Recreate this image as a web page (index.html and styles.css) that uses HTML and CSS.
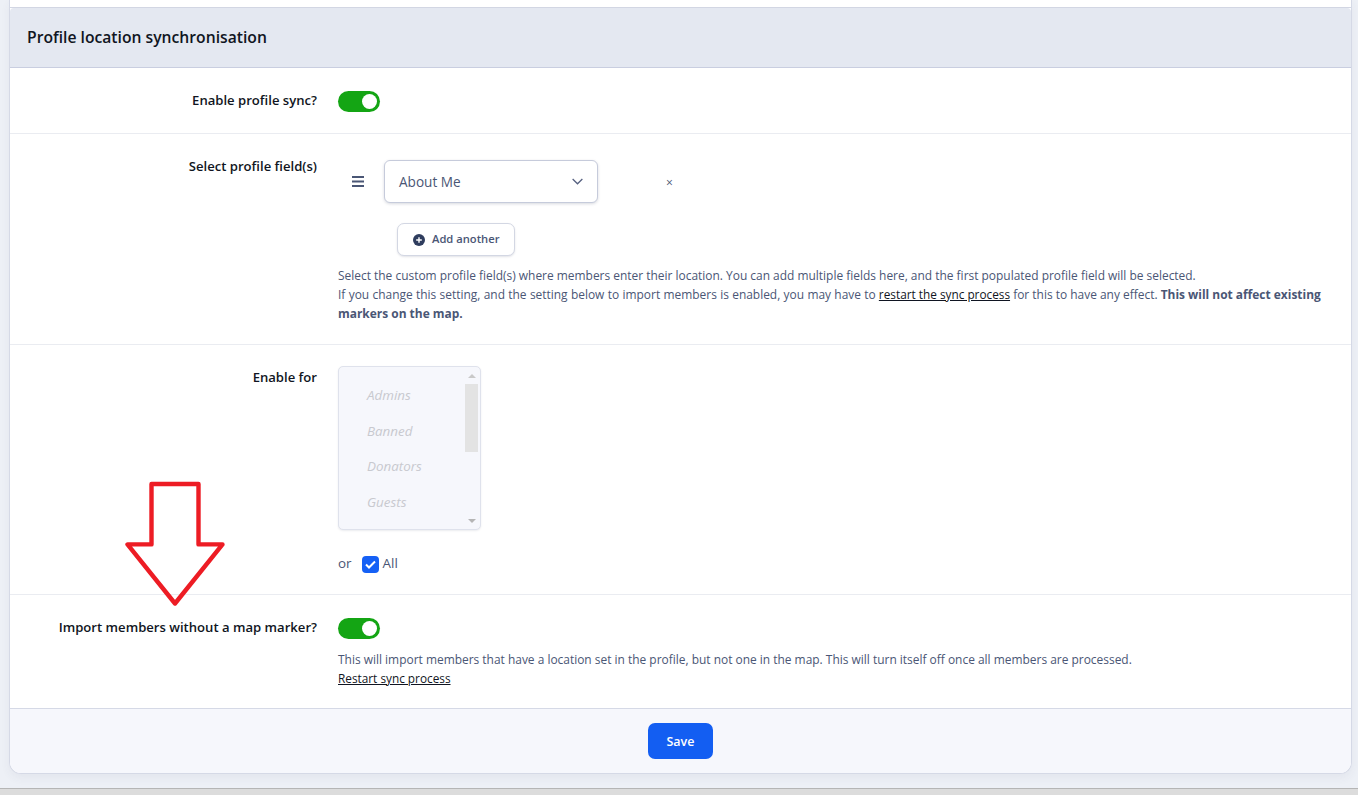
FILE: index.html
```html
<!DOCTYPE html>
<html lang="en">
<head>
  <meta charset="UTF-8">
  <title>Profile location synchronisation</title>
  <link rel="stylesheet" href="styles.css">
</head>
<body>

<div class="page">
  <div class="card">
    <div class="card-top"></div>
    <h2 class="card-header">Profile location synchronisation</h2>

    <!-- ENABLE SYNC -->
    <div class="row row-sync">
      <div class="label">Enable profile sync?</div>
      <div class="field"><span class="toggle"></span></div>
    </div>

    <!-- PROFILE FIELDS -->
    <div class="row row-fields">
      <div class="label">Select profile field(s)</div>
      <div class="field">
        <div class="sort-line">
          <svg class="handle" width="12" height="11" viewBox="0 0 12 11"><path d="M0 1h12M0 5.500h12M0 10h12" stroke="#4a5675" stroke-width="2" fill="none"/></svg>
          <div class="select">
            <span>About Me</span>
            <svg width="11" height="7" viewBox="0 0 12 7"><path d="M.7.7 6 6l5.300-5.300" stroke="#566180" stroke-width="1.400" fill="none"/></svg>
          </div>
          <span class="remove">×</span>
        </div>
        <button class="add-btn">
          <svg width="12" height="12" viewBox="0 0 12 12"><circle cx="6" cy="6" r="6" fill="#2f3d5e"/><path d="M6 3.200v5.600M3.200 6h5.600" stroke="#fff" stroke-width="1.400"/></svg>
          Add another
        </button>
        <p class="help">Select the custom profile field(s) where members enter their location. You can add multiple fields here, and the first populated profile field will be selected.<br>
        <span class="lead-in">If you change this setting, and the setting below to import members is enabled, you may have to</span> <a href="#">restart the sync process</a> for this to have any effect. <b>This will not affect existing</b> <b>markers on the map.</b></p>
      </div>
    </div>

    <!-- GROUPS -->
    <div class="row row-groups">
      <div class="label">Enable for</div>
      <div class="field">
        <div class="listbox">
          <ul class="list-items">
            <li>Admins</li>
            <li>Banned</li>
            <li>Donators</li>
            <li>Guests</li>
          </ul>
          <div class="scrollbar">
            <span class="arrow-up"></span>
            <span class="thumb"></span>
            <span class="arrow-down"></span>
          </div>
        </div>
        <div class="or-line">
          <span>or</span>
          <span class="checkbox">
            <svg width="11" height="9" viewBox="0 0 11 9"><path d="M1 4.500 4 7.500 10 1.500" stroke="#fff" stroke-width="2" fill="none"/></svg>
          </span>
          <span class="all">All</span>
        </div>
      </div>
    </div>

    <!-- IMPORT -->
    <div class="row row-import">
      <div class="label">Import members without a map marker?</div>
      <div class="field">
        <span class="toggle"></span>
        <p class="help help-import">This will import members that have a location set in the profile, but not one in the map. This will turn itself off once all members are processed.<br>
        <a href="#">Restart sync process</a></p>
      </div>
    </div>

    <div class="card-footer"><button class="save-btn">Save</button></div>
  </div>

  <svg class="red-arrow" width="110" height="132" viewBox="0 0 110 132"><path d="M31.500 5H78.500V65.400H102.500L55 124.500 7.500 65.400H31.500Z" fill="none" stroke="#ed1c24" stroke-width="4.400" stroke-linejoin="round"/></svg>
</div>

<div class="bottom-strip"></div>

</body>
</html>
```

FILE: styles.css
```css
html, body { margin: 0; padding: 0; height: 795px; overflow: hidden; }
body { background: #edf0f6; font-family: "Open Sans", "Noto Sans", Arial, sans-serif; font-size: 13px; color: #4a5675; }

.page { height: 788px; padding: 0 6px 0 9px; box-sizing: border-box; }

.card {
  background: #fff;
  border: 1px solid #d5d9e6;
  border-top: 0;
  border-radius: 0 0 12px 12px;
  box-shadow: 0 4px 10px rgba(60, 70, 100, 0.06);
  overflow: hidden;
}
.card-top { height: 7px; background: #fff; border-bottom: 1px solid #d2d6e3; }
.card-header {
  margin: 0;
  height: 59px;
  line-height: 58px;
  padding-left: 17px;
  background: #e4e8f1;
  border-bottom: 1px solid #c9cee0;
  border-radius: 4px 4px 0 0;
  font-size: 15.700px;
  font-weight: 600;
  color: #101522;
}

/* LINHAS DO FORMULARIO */
.row { display: grid; grid-template-columns: 318px 1fr; border-bottom: 1px solid #eaecf1; box-sizing: border-box; }
.row-sync { height: 66px; padding-top: 23px; }
.row-fields { height: 211px; padding-top: 23px; }
.row-groups { height: 250px; padding-top: 21px; }
.row-groups .label { padding-top: 2px; }
.row-import { height: 114px; padding-top: 23px; border-bottom: 1px solid #d5d9e6; }

.label { text-align: right; padding-right: 11px; font-size: 13.100px; font-weight: 600; color: #101522; line-height: 18px; }
.field { padding-left: 10px; padding-right: 20px; }

.toggle { display: block; position: relative; width: 42px; height: 21px; border-radius: 11px; background: #14a514; }
.toggle::after { content: ""; position: absolute; right: 3px; top: 3px; width: 15px; height: 15px; border-radius: 50%; background: #fff; }

.sort-line { display: flex; align-items: center; margin-top: 3px; }
.handle { margin-left: 14px; }
.select {
  display: flex;
  align-items: center;
  justify-content: space-between;
  box-sizing: border-box;
  width: 214px;
  height: 43px;
  margin-left: 20px;
  padding: 0 14px;
  border: 1px solid #c6cbdb;
  border-radius: 6px;
  background: #fff;
  box-shadow: 0 1px 3px rgba(60, 70, 100, 0.2);
  font-size: 13.600px;
}
.remove { margin: 1px 0 0 68px; font-size: 12px; color: #4a5675; }

.add-btn {
  display: flex;
  align-items: center;
  gap: 7px;
  box-sizing: border-box;
  width: 118px;
  height: 33px;
  margin: 20px 0 0 59px;
  padding: 0 0 3px 15px;
  border: 1px solid #d3d7e3;
  border-radius: 7px;
  background: #fff;
  box-shadow: 0 1px 2px rgba(60, 70, 100, 0.15);
  font-family: inherit;
  font-size: 11.200px;
  font-weight: 600;
  color: #4a5675;
}
.add-btn svg { margin-top: 3px; }

.help { margin: 10px 0 0; font-size: 11.950px; line-height: 19px; color: #4a5675; }
.help a { color: #101522; text-decoration: underline; font-size: 11.800px; }
.help b { font-weight: 700; }
.help-import { margin-top: 11px; }
.lead-in { word-spacing: 0.220px; }

/* LISTA DE GRUPOS */
.listbox {
  display: flex;
  justify-content: space-between;
  box-sizing: border-box;
  width: 143px;
  height: 164px;
  border: 1px solid #dfe2ec;
  border-radius: 5px;
  background: #f6f7fc;
  box-shadow: 0 1px 2px rgba(60, 70, 100, 0.1);
}
.list-items { list-style: none; margin: 0; padding: 10px 0 0 28px; font-style: italic; font-size: 13.400px; color: #c8c9cf; }
.list-items li { height: 35.500px; line-height: 36px; }
.scrollbar { display: flex; flex-direction: column; align-items: center; width: 13px; margin: 0 2px 0 0; }
.arrow-up, .arrow-down { width: 0; height: 0; border-left: 4px solid transparent; border-right: 4px solid transparent; }
.arrow-up { margin-top: 7px; border-bottom: 4px solid #c9c9c9; }
.thumb { width: 13px; height: 68px; margin-top: 6px; background: #e3e3e3; }
.arrow-down { margin-top: auto; margin-bottom: 6px; border-top: 4px solid #b5b5b5; }

.or-line { display: flex; align-items: center; margin-top: 25px; height: 18px; font-size: 13.400px; line-height: 16px; }
.or-line span:first-child, .all { margin-top: -2px; }
.checkbox { display: flex; align-items: center; justify-content: center; width: 17px; height: 17px; margin-left: 10px; border-radius: 4px; background: #1560f5; }
.all { margin-left: 4px; }

.card-footer { display: flex; justify-content: center; align-items: center; height: 64px; background: #f6f7fc; }
.save-btn { width: 65px; height: 36px; border: 0; border-radius: 7px; background: #135ef2; color: #fff; font-family: inherit; font-size: 12.500px; font-weight: 600; }

/* SETA VERMELHA POR CIMA DO CARTAO */
.red-arrow { position: absolute; left: 120px; top: 479px; }

.bottom-strip { height: 6px; border-top: 1px solid #b5b5b5; background: #dcdcdc; }
```
